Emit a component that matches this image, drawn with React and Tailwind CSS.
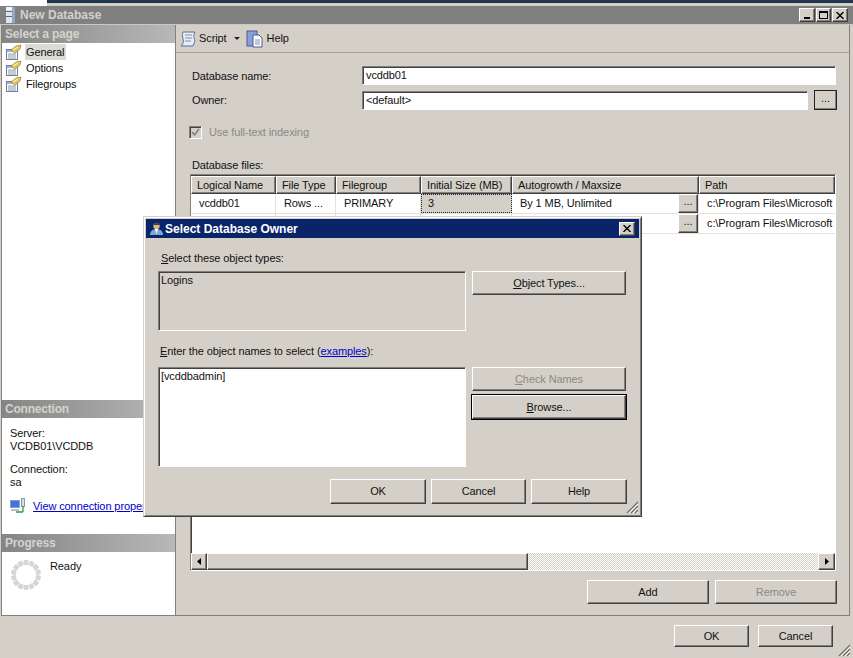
import React from 'react';

const raised = 'border border-t-white border-l-white border-r-[#404040] border-b-[#404040] shadow-[inset_-1px_-1px_0_#808080] bg-[#d4d0c8]';
const sunken = 'border border-t-[#808080] border-l-[#808080] border-r-white border-b-white';

const Btn = ({ children, className = '', disabled }) => (
  <div className={`${raised} flex items-center justify-center ${disabled ? 'text-[#8a8a86]' : 'text-[#111]'} ${className}`}>{children}</div>
);

const PageIcon = () => (
  <svg width="16" height="16" viewBox="0 0 16 16" className="shrink-0">
    <rect x="0.5" y="5.5" width="11" height="10" fill="#fff" stroke="#6b7f9a" />
    <rect x="1" y="6" width="10" height="2" fill="#9fb4d0" />
    <path d="M2 10h8M2 12h8M2 14h8" stroke="#8a96a8" />
    <path d="M5 6l5-4 5-1-1 4-5 4z" fill="#e3c662" stroke="#8a7420" strokeWidth="0.6" />
    <path d="M7 6l5-3" stroke="#fff3b8" />
  </svg>
);

const SectionHead = ({ children }) => (
  <div className="h-[18px] pl-[3px] flex items-center bg-gradient-to-r from-[#858585] to-[#b8b8b8] text-[#d6d3cc] font-bold text-[12px] tracking-[-0.2px]">{children}</div>
);

const Spinner = () => {
  const dots = Array.from({ length: 14 }, (_, i) => (i * 360) / 14);
  return (
    <svg width="32" height="32" viewBox="0 0 32 32">
      {dots.map((d) => (
        <rect key={d} x="13.5" y="1" width="5" height="5" rx="1" fill="#d6d6d6" transform={`rotate(${d} 16 16)`} />
      ))}
    </svg>
  );
};

const Grip = ({ className = '' }) => (
  <svg width="13" height="13" viewBox="0 0 13 13" className={className}>
    <path d="M12 1L1 12M12 5L5 12M12 9L9 12" stroke="#6f6f6b" strokeWidth="1.2" />
    <path d="M12 3L3 12M12 7L7 12M12 11L11 12" stroke="#fff" strokeWidth="1" />
  </svg>
);

const columns = [
  ['Logical Name', 'w-[85px]'],
  ['File Type', 'w-[60px]'],
  ['Filegroup', 'w-[85px]'],
  ['Initial Size (MB)', 'w-[91px]'],
  ['Autogrowth / Maxsize', 'w-[187px]'],
  ['Path', 'flex-1 min-w-0'],
];

const Row = ({ name, type, group, size, focus }) => (
  <div className="flex h-[20px] border-b border-[#e4e2dc] bg-white items-center">
    <div className="w-[85px] pl-[8px] border-r border-[#e4e2dc] h-full flex items-center">{name}</div>
    <div className="w-[60px] pl-[8px] border-r border-[#e4e2dc] h-full flex items-center">{type}</div>
    <div className="w-[85px] pl-[8px] border-r border-[#e4e2dc] h-full flex items-center">{group}</div>
    <div className={`w-[91px] pl-[6px] h-full flex items-center ${focus ? 'bg-[#d4d0c8] border border-dotted border-[#222]' : 'border-r border-[#e4e2dc]'}`}>{size}</div>
    <div className="w-[187px] pl-[8px] h-full flex items-center justify-between border-r border-[#e4e2dc]">
      <span>By 1 MB, Unlimited</span>
      <Btn className="w-[20px] h-[19px] text-[11px] pb-1">...</Btn>
    </div>
    <div className="flex-1 min-w-0 pl-[8px] whitespace-nowrap overflow-hidden">c:\Program Files\Microsoft</div>
  </div>
);

const Dialog = () => (
  <div className="absolute left-[143px] top-[216px] w-[499px] h-[301px] bg-[#d4d0c8] border border-t-[#d4d0c8] border-l-[#d4d0c8] border-r-[#404040] border-b-[#404040] shadow-[inset_1px_1px_0_#fff,inset_-1px_-1px_0_#808080] p-[2px] flex flex-col">
    <div className="h-[19px] bg-[#0a246a] flex items-center pl-[3px] pr-[4px] shrink-0">
      <svg width="15" height="15" viewBox="0 0 15 15" className="mr-[1px]">
        <path d="M1 14c0-4 3-6 6.5-6S14 10 14 14z" fill="#7ea6d8" />
        <circle cx="7.5" cy="5" r="3.2" fill="#d9b48f" />
        <path d="M4 4c0-3 7-3 7 0z" fill="#4a4038" />
        <path d="M6 8l1.5 5L9 8z" fill="#fff" />
      </svg>
      <span className="text-white font-bold text-[12px] tracking-normal">Select Database Owner</span>
      <div className={`${raised} ml-auto w-[16px] h-[14px] flex items-center justify-center`}>
        <svg width="8" height="7" viewBox="0 0 8 7"><path d="M0.5 0l7 7M7.5 0l-7 7" stroke="#000" strokeWidth="1.4" /></svg>
      </div>
    </div>
    <div className="relative flex-1 flex pl-[12px] pr-[13px]">
      <div className="w-[308px] shrink-0">
        <div className="mt-[13px] ml-[3px] h-[14px] leading-[14px]"><u>S</u>elect these object types:</div>
        <div className={`mt-[6px] h-[60px] ${sunken} shadow-[inset_1px_1px_0_#404040] pl-[2px] pt-[3px]`}>Logins</div>
        <div className="mt-[13px] ml-[2px] h-[14px] leading-[14px] whitespace-nowrap">
          <u>E</u>nter the object names to select (<span className="text-[#0000c8] underline">examples</span>):
        </div>
        <div className={`mt-[9px] h-[100px] bg-white ${sunken} shadow-[inset_1px_1px_0_#404040] pl-[2px] pt-[3px]`}>[vcddbadmin]</div>
      </div>
      <div className="ml-[6px] w-[154px] flex flex-col">
        <Btn className="mt-[33px] h-[24px]"><span><u>O</u>bject Types...</span></Btn>
        <Btn disabled className="mt-[72px] h-[24px]"><span><u>C</u>heck Names</span></Btn>
        <Btn className="mt-[4px] h-[24px] outline outline-1 outline-black"><span><u>B</u>rowse...</span></Btn>
      </div>
      <div className="absolute left-[184px] top-[241px] flex gap-[5px]">
        <Btn className="w-[96px] h-[25px]">OK</Btn>
        <Btn className="w-[95px] h-[25px]">Cancel</Btn>
        <Btn className="w-[96px] h-[25px]">Help</Btn>
      </div>
      <Grip className="absolute right-0 bottom-0" />
    </div>
  </div>
);

export default function App() {
  return (
    <div className="relative w-[853px] h-[658px] overflow-hidden bg-[#d4d0c8] text-[11px] tracking-[-0.1px] text-[#111] flex flex-col font-['Liberation_Sans',sans-serif] leading-none">
      <div className="h-[6px] flex shrink-0 bg-[#d4d0c8]">
        <div className="w-[47px] bg-white" />
        <div className="flex-1 h-[3px] bg-[#1f3550]" />
      </div>

      <div className="h-[19px] bg-[#808080] flex items-center pl-[6px] pr-[5px] shrink-0 border-b border-[#c8c8c4]">
        <svg width="9" height="16" viewBox="0 0 9 16" className="mr-[5px]">
          <rect x="0" y="0" width="9" height="16" fill="#dfe3ec" />
          <rect x="0" y="0" width="9" height="3" fill="#f4f6fa" />
          <rect x="0" y="4" width="9" height="1" fill="#5a6a8a" />
          <rect x="0" y="9" width="9" height="1" fill="#5a6a8a" />
          <rect x="6" y="0" width="3" height="16" fill="#9aa6c0" />
        </svg>
        <span className="text-[#d4d0c8] font-bold text-[12px] tracking-normal">New Database</span>
        <div className="ml-auto flex gap-[1px]">
          <Btn className="w-[16px] h-[14px] items-end pb-[2px]"><div className="w-[6px] h-[2px] bg-black" /></Btn>
          <Btn className="w-[15px] h-[14px]"><div className="w-[9px] h-[8px] border border-t-2 border-black" /></Btn>
          <Btn className="w-[16px] h-[14px]">
            <svg width="8" height="7" viewBox="0 0 8 7"><path d="M0.5 0l7 7M7.5 0l-7 7" stroke="#000" strokeWidth="1.4" /></svg>
          </Btn>
        </div>
      </div>

      <div className="h-[591px] flex shrink-0 ml-[1px] mr-[3px] border-b border-[#808080]">
        <div className="w-[175px] shrink-0 bg-white border-l border-[#808080] border-r flex flex-col">
          <SectionHead>Select a page</SectionHead>
          <div className="pl-[4px] pt-[1px]">
            {['General', 'Options', 'Filegroups'].map((p, i) => (
              <div key={p} className="h-[16px] flex items-center">
                <PageIcon />
                <span className={`ml-[3px] px-[1px] w-fit h-[16px] flex items-center ${i === 0 ? 'bg-[#dcdad5] pr-[2px]' : ''}`}>{p}</span>
              </div>
            ))}
          </div>
          <div className="flex-1" />
          <SectionHead>Connection</SectionHead>
          <div className="h-[116px] pl-[8px] pt-[9px]">
            <div className="h-[13px] leading-[13px]">Server:</div>
            <div className="h-[13px] leading-[13px]">VCDB01\VCDDB</div>
            <div className="mt-[10px] h-[13px] leading-[13px]">Connection:</div>
            <div className="h-[13px] leading-[13px]">sa</div>
            <div className="mt-[9px] flex items-center whitespace-nowrap">
              <svg width="16" height="16" viewBox="0 0 16 16" className="mr-[7px]">
                <rect x="0.5" y="2.5" width="9" height="7" fill="#3f74d8" stroke="#8aa0c8" />
                <rect x="1" y="11" width="8" height="2" fill="#b8c0cc" />
                <rect x="11.5" y="0.5" width="3" height="8" fill="#d8dce4" stroke="#8a96a8" />
                <path d="M6 14h7M13 8v6" stroke="#2e9a3a" strokeWidth="1.3" />
              </svg>
              <span className="text-[#0000c8] underline">View connection properties</span>
            </div>
          </div>
          <SectionHead>Progress</SectionHead>
          <div className="flex-1 max-h-[63px] min-h-[63px] flex pl-[8px] pt-[7px]">
            <Spinner />
            <span className="ml-[8px] mt-[2px]">Ready</span>
          </div>
        </div>

        <div className="flex-1 min-w-0 flex flex-col border-r border-[#808080]">
          <div className="h-[28px] shrink-0 border-b border-[#a0a09c] flex items-center pl-[3px]">
            <svg width="18" height="18" viewBox="0 0 18 18" className="mr-[1px]">
              <path d="M4 2h12c-2 3-1 6 0 9l-2 5H2c2-2 3-4 2-7-.5-2-1-5 0-7z" fill="#e8ecf4" stroke="#5a6f9a" />
              <path d="M6 5h7M6 8h7M6 11h6" stroke="#8090b0" />
            </svg>
            <span className="ml-[1px] mb-[1px]">Script</span>
            <svg width="6" height="4" viewBox="0 0 6 4" className="ml-[7px]"><path d="M0 0h6L3 3z" fill="#222" /></svg>
            <svg width="18" height="18" viewBox="0 0 18 18" className="ml-[6px]">
              <rect x="1" y="1" width="10" height="15" fill="#8a9fd8" stroke="#4a5a98" />
              <path d="M7 5h6l3 3v9H7z" fill="#fff" stroke="#4a5a98" />
              <path d="M9 10h5M9 12h5M9 14h5" stroke="#8090b0" />
            </svg>
            <span className="ml-[3px] mb-[1px]">Help</span>
          </div>

          <div className="flex-1 min-w-0 pl-[14px] pr-[13px] flex flex-col">
            <div className="flex items-center mt-[13px] h-[19px]">
              <span className="w-[170px] shrink-0 ml-[2px] pt-[1px]">Database name:</span>
              <div className={`${sunken} shadow-[inset_1px_1px_0_#404040] flex-1 min-w-0 h-[19px] bg-white pl-[3px] flex items-center`}>vcddb01</div>
            </div>
            <div className="flex items-center mt-[5px] h-[20px]">
              <span className="w-[170px] shrink-0 ml-[2px] pt-[1px]">Owner:</span>
              <div className={`${sunken} shadow-[inset_1px_1px_0_#404040] flex-1 min-w-0 h-[19px] bg-white pl-[3px] flex items-center`}>&lt;default&gt;</div>
              <Btn className="w-[23px] h-[20px] ml-[6px] -mr-[1px] outline outline-1 outline-[#222] -outline-offset-1 pb-1 text-[11px]">...</Btn>
            </div>
            <div className="flex items-center mt-[15px] h-[14px] text-[#8a8a86]">
              <div className={`${sunken} w-[13px] h-[13px] flex items-center justify-center -ml-[1px] shadow-[inset_1px_1px_0_#404040]`}>
                <svg width="9" height="9" viewBox="0 0 9 9"><path d="M1 4l2.5 3L8 1" fill="none" stroke="#808080" strokeWidth="1.6" /></svg>
              </div>
              <span className="ml-[7px]">Use full-text indexing</span>
            </div>
            <div className="mt-[19px] ml-[2px] h-[14px] leading-[14px]">Database files:</div>
            <div className={`mt-[2px] h-[397px] ${sunken} shadow-[inset_1px_1px_0_#404040] bg-white flex flex-col pt-[1px]`}>
              <div className="flex h-[18px] shrink-0">
                {columns.map(([c, w]) => (
                  <div key={c} className={`${w} ${raised} pl-[5px] flex items-center whitespace-nowrap overflow-hidden`}>{c}</div>
                ))}
              </div>
              <Row name="vcddb01" type="Rows ..." group="PRIMARY" size="3" focus />
              <Row />
              <div className="flex-1" />
              <div className="h-[17px] flex shrink-0 bg-[repeating-conic-gradient(#d4d0c8_0_25%,#ffffff_0_50%)] bg-[length:2px_2px]">
                <Btn className="w-[16px]">
                  <svg width="4" height="7" viewBox="0 0 4 7"><path d="M4 0v7L0 3.5z" fill="#000" /></svg>
                </Btn>
                <Btn className="w-[321px]" />
                <div className="flex-1" />
                <Btn className="w-[17px]">
                  <svg width="4" height="7" viewBox="0 0 4 7"><path d="M0 0v7l4-3.5z" fill="#000" /></svg>
                </Btn>
              </div>
            </div>
            <div className="flex justify-end gap-[6px] mt-[9px] -mr-[1px]">
              <Btn className="w-[122px] h-[24px]">Add</Btn>
              <Btn disabled className="w-[122px] h-[24px]">Remove</Btn>
            </div>
          </div>
        </div>
      </div>

      <div className="relative flex-1 flex justify-end gap-[9px] pt-[9px] pr-[20px]">
        <Btn className="w-[75px] h-[22px]">OK</Btn>
        <Btn className="w-[75px] h-[22px]">Cancel</Btn>
        <Grip className="absolute right-[2px] bottom-[1px]" />
      </div>

      <Dialog />
    </div>
  );
}
